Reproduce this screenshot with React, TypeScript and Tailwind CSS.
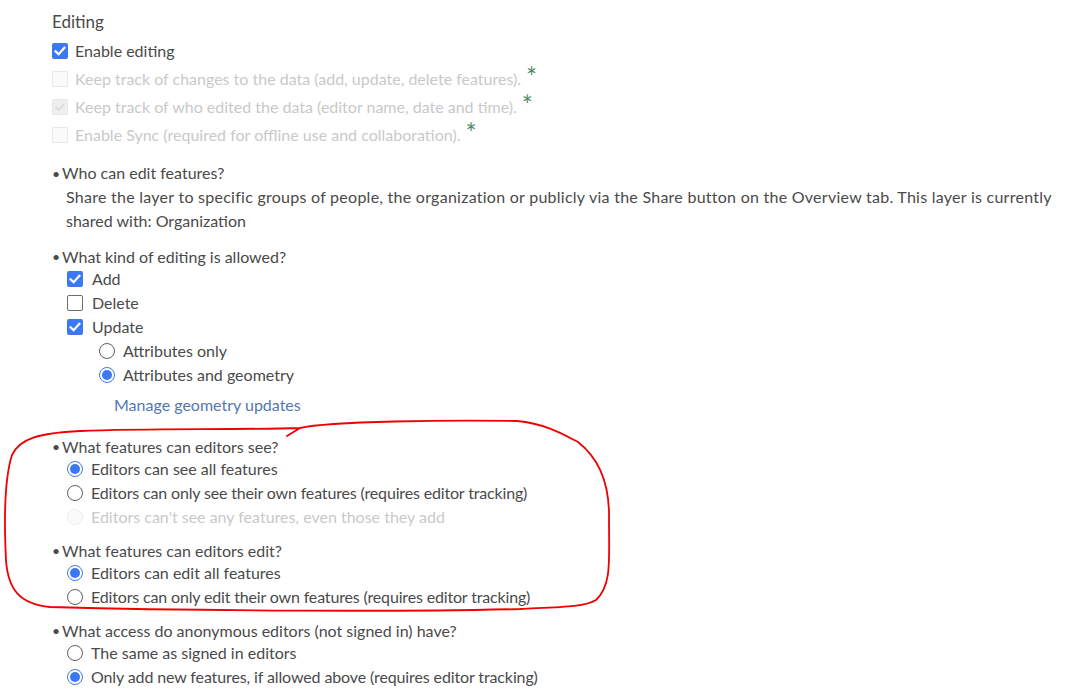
import React from "react";

const Check = ({ color = "#fff" }: { color?: string }) => (
  <svg viewBox="0 0 16 16" className="w-[16px] h-[16px]">
    <path d="M3.6 8.4 L6.6 11.2 L12.4 4.8" fill="none" stroke={color} strokeWidth="2.2" strokeLinecap="square" />
  </svg>
);

function Checkbox({ state }: { state: "on" | "off" | "dis" | "dison" }) {
  if (state === "on")
    return (
      <span className="w-[16px] h-[16px] rounded-[2px] bg-[#3b78f2] flex items-center justify-center shrink-0">
        <Check />
      </span>
    );
  if (state === "off")
    return <span className="w-[16px] h-[16px] rounded-[2px] border border-[#6b6b6b] bg-white shrink-0" />;
  if (state === "dison")
    return (
      <span className="w-[16px] h-[16px] rounded-[2px] bg-[#efefef] border border-[#e8e8e8] flex items-center justify-center shrink-0">
        <Check color="#dcdcdc" />
      </span>
    );
  return <span className="w-[16px] h-[16px] rounded-[2px] bg-[#fafafa] border border-[#e8e8e8] shrink-0" />;
}

function Radio({ state }: { state: "on" | "off" | "dis" }) {
  if (state === "on")
    return (
      <span className="w-[16px] h-[16px] rounded-full border border-[#3b78f2] flex items-center justify-center shrink-0">
        <span className="w-[10px] h-[10px] rounded-full bg-[#3b78f2]" />
      </span>
    );
  if (state === "off")
    return <span className="w-[16px] h-[16px] rounded-full border border-[#5e5e5e] bg-white shrink-0" />;
  return <span className="w-[16px] h-[16px] rounded-full border border-[#ececec] bg-[#fbfbfb] shrink-0" />;
}

const Star = () => (
  <span className="relative -top-[7px] -ml-[2px] text-[#4f8a68] text-[26px] leading-none h-[16px]">*</span>
);

function Bullet({ children, h = "h-[21px]" }: { children: React.ReactNode; h?: string }) {
  return (
    <div className={`flex items-center ${h}`}>
      <span className="w-[10px] text-[#4a4a4a] text-[14px]">•</span>
      <span>{children}</span>
    </div>
  );
}

export default function App() {
  return (
    <div
      className="relative w-[1066px] h-[698px] overflow-hidden bg-white text-[#4a4a4a] text-[16px]"
      style={{ fontFamily: "Lato, 'Noto Sans', sans-serif" }}
    >
      <div className="pl-[52px] pt-[8px] flex flex-col">
        <div className="h-[28px] flex items-center text-[17px]">Editing</div>
        <div className="h-[28px] mt-[1px] flex items-center gap-[7px]">
          <Checkbox state="on" />
          <span>Enable editing</span>
        </div>
        <div className="h-[28px] flex items-center gap-[7px] text-[#c9c9c9]">
          <Checkbox state="dis" />
          <span>Keep track of changes to the data (add, update, delete features).</span>
          <Star />
        </div>
        <div className="h-[28px] flex items-center gap-[7px] text-[#c9c9c9]">
          <Checkbox state="dison" />
          <span>Keep track of who edited the data (editor name, date and time).</span>
          <Star />
        </div>
        <div className="h-[28px] flex items-center gap-[7px] text-[#c9c9c9]">
          <Checkbox state="dis" />
          <span>Enable Sync (required for offline use and collaboration).</span>
          <Star />
        </div>

        <div className="mt-[12px]">
          <Bullet h="h-[24px]">Who can edit features?</Bullet>
          <div className="pl-[14px] leading-[24px]">
            <div className="whitespace-nowrap tracking-[0.26px]">
              Share the layer to specific groups of people, the organization or publicly via the Share button on the Overview tab. This layer is currently
            </div>
            <div className="whitespace-nowrap">shared with: Organization</div>
          </div>
        </div>

        <div className="mt-[13px]">
          <Bullet>What kind of editing is allowed?</Bullet>
          <div className="pl-[15px]">
            <div className="h-[24px] flex items-center gap-[9px]">
              <Checkbox state="on" />
              <span>Add</span>
            </div>
            <div className="h-[24px] flex items-center gap-[9px]">
              <Checkbox state="off" />
              <span>Delete</span>
            </div>
            <div className="h-[24px] flex items-center gap-[9px]">
              <Checkbox state="on" />
              <span>Update</span>
            </div>
            <div className="pl-[32px]">
              <div className="h-[24px] flex items-center gap-[8px]">
                <Radio state="off" />
                <span>Attributes only</span>
              </div>
              <div className="h-[24px] flex items-center gap-[8px]">
                <Radio state="on" />
                <span>Attributes and geometry</span>
              </div>
              <div className="mt-[6px] h-[24px] flex items-center pl-[15px] text-[#5577b0]">
                Manage geometry updates
              </div>
            </div>
          </div>
        </div>

        <div className="mt-[19px]">
          <Bullet>What features can editors see?</Bullet>
          <div className="pl-[15px]">
            <div className="h-[24px] flex items-center gap-[8px]">
              <Radio state="on" />
              <span>Editors can see all features</span>
            </div>
            <div className="h-[24px] flex items-center gap-[8px]">
              <Radio state="off" />
              <span className="tracking-[-0.16px]">Editors can only see their own features (requires editor tracking)</span>
            </div>
            <div className="h-[24px] flex items-center gap-[8px] text-[#c9c9c9]">
              <Radio state="dis" />
              <span>Editors can't see any features, even those they add</span>
            </div>
          </div>
        </div>

        <div className="mt-[11px]">
          <Bullet>What features can editors edit?</Bullet>
          <div className="pl-[15px]">
            <div className="h-[24px] flex items-center gap-[8px]">
              <Radio state="on" />
              <span>Editors can edit all features</span>
            </div>
            <div className="h-[24px] flex items-center gap-[8px]">
              <Radio state="off" />
              <span className="tracking-[-0.16px]">Editors can only edit their own features (requires editor tracking)</span>
            </div>
          </div>
        </div>

        <div className="mt-[11px]">
          <Bullet>What access do anonymous editors (not signed in) have?</Bullet>
          <div className="pl-[15px]">
            <div className="h-[24px] flex items-center gap-[8px]">
              <Radio state="off" />
              <span>The same as signed in editors</span>
            </div>
            <div className="h-[24px] flex items-center gap-[8px]">
              <Radio state="on" />
              <span className="tracking-[-0.12px]">Only add new features, if allowed above (requires editor tracking)</span>
            </div>
          </div>
        </div>
      </div>

      <svg
        className="absolute left-0 top-0 pointer-events-none"
        width="1066"
        height="698"
        viewBox="0 0 1066 698"
      >
        <path
          d="M 287 436 L 300 428 C 330 421, 450 420, 517 421 C 548 424, 566 436, 578 442 C 596 456, 610 480, 609 520 C 609 560, 612 585, 596 600 C 585 607, 560 607, 520 609 C 400 612, 200 611, 50 607 C 20 604, 8 590, 6 560 C 4 520, 4 480, 12 455 C 20 438, 40 433, 80 431 C 150 428, 230 430, 300 428"
          fill="none"
          stroke="#f00000"
          strokeWidth="1.8"
          strokeLinecap="round"
          strokeLinejoin="round"
        />
      </svg>
    </div>
  );
}
